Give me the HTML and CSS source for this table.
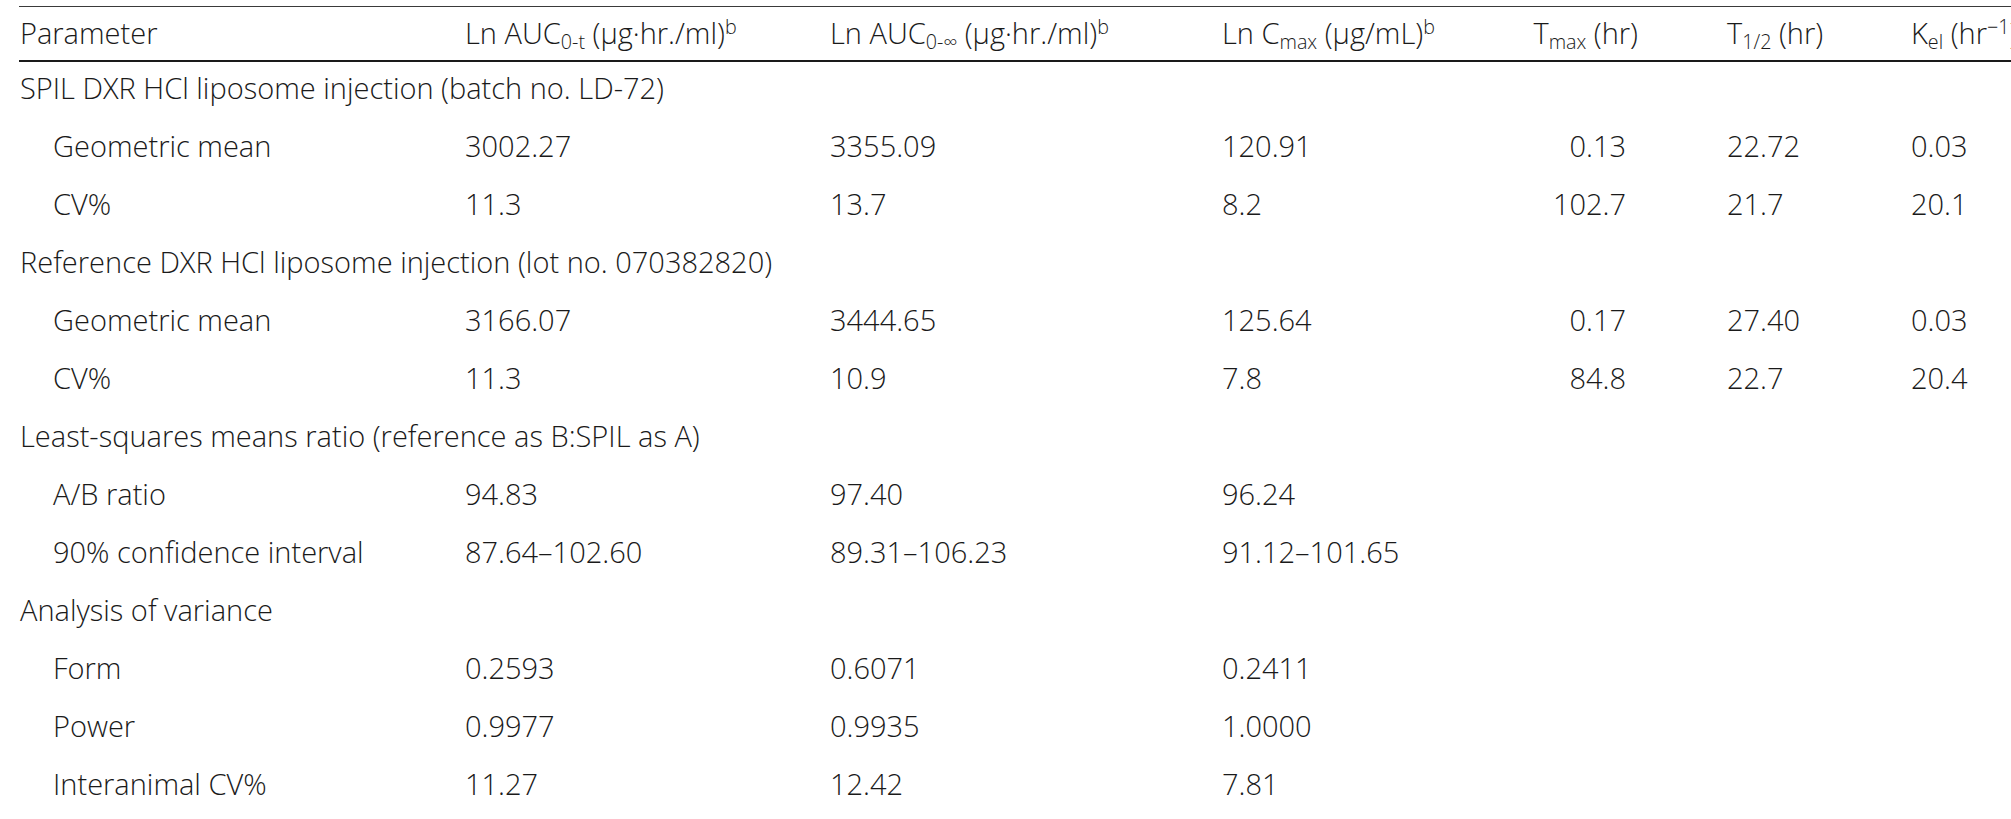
FILE: index.html
```html
<!DOCTYPE html>
<html lang="en">
<head>
<meta charset="utf-8">
<title>Pharmacokinetic parameters</title>
<link rel="stylesheet" href="styles.css">
</head>
<body>
<div class="frame">
<table class="pk">
  <colgroup>
    <col class="c1"><col class="c2"><col class="c3"><col class="c4"><col class="c5"><col class="c6"><col class="c7">
  </colgroup>
  <thead>
    <tr>
      <th class="first">Parameter</th>
      <th>Ln AUC<sub>0-t</sub> (μg·hr./ml)<sup>b</sup></th>
      <th>Ln AUC<sub>0-∞</sub> (μg·hr./ml)<sup>b</sup></th>
      <th>Ln C<sub>max</sub> (μg/mL)<sup>b</sup></th>
      <th class="num">T<sub>max</sub> (hr)</th>
      <th class="pad">T<sub>1/2</sub> (hr)</th>
      <th>K<sub>el</sub> (hr<sup>−1</sup>)</th>
    </tr>
  </thead>
  <tbody>
    <tr class="group"><td colspan="7" class="first">SPIL DXR HCl liposome injection (batch no. LD-72)</td></tr>
    <tr><td class="sub">Geometric mean</td><td>3002.27</td><td>3355.09</td><td>120.91</td><td class="num">0.13</td><td class="pad">22.72</td><td>0.03</td></tr>
    <tr><td class="sub">CV%</td><td>11.3</td><td>13.7</td><td>8.2</td><td class="num">102.7</td><td class="pad">21.7</td><td>20.1</td></tr>
    <tr class="group"><td colspan="7" class="first">Reference DXR HCl liposome injection (lot no. 070382820)</td></tr>
    <tr><td class="sub">Geometric mean</td><td>3166.07</td><td>3444.65</td><td>125.64</td><td class="num">0.17</td><td class="pad">27.40</td><td>0.03</td></tr>
    <tr><td class="sub">CV%</td><td>11.3</td><td>10.9</td><td>7.8</td><td class="num">84.8</td><td class="pad">22.7</td><td>20.4</td></tr>
    <tr class="group"><td colspan="7" class="first">Least-squares means ratio (reference as B:SPIL as A)</td></tr>
    <tr><td class="sub">A/B ratio</td><td>94.83</td><td>97.40</td><td>96.24</td><td class="num"></td><td class="pad"></td><td></td></tr>
    <tr><td class="sub">90% confidence interval</td><td>87.64–102.60</td><td>89.31–106.23</td><td>91.12–101.65</td><td class="num"></td><td class="pad"></td><td></td></tr>
    <tr class="group"><td colspan="7" class="first">Analysis of variance</td></tr>
    <tr><td class="sub">Form</td><td>0.2593</td><td>0.6071</td><td>0.2411</td><td class="num"></td><td class="pad"></td><td></td></tr>
    <tr><td class="sub">Power</td><td>0.9977</td><td>0.9935</td><td>1.0000</td><td class="num"></td><td class="pad"></td><td></td></tr>
    <tr><td class="sub">Interanimal CV%</td><td>11.27</td><td>12.42</td><td>7.81</td><td class="num"></td><td class="pad"></td><td></td></tr>
  </tbody>
</table>
</div>
</body>
</html>
```
FILE: styles.css
```css
html, body {
  margin: 0;
  padding: 0;
  background: #ffffff;
}
.frame {
  width: 2011px;
  height: 819px;
  overflow: hidden;
  padding-top: 6px;
  padding-left: 19px;
  box-sizing: border-box;
}
.pk {
  border-collapse: collapse;
  table-layout: fixed;
  width: 2100px;
  font-family: "Open Sans", "Noto Sans", sans-serif;
  font-size: 29px;
  font-weight: 350;
  color: #1a1a1a;
}
.c1 { width: 446px; }
.c2 { width: 365px; }
.c3 { width: 392px; }
.c4 { width: 266px; }
.c5 { width: 150px; }
.c6 { width: 273px; }
.c7 { width: 208px; }
.pk th, .pk td {
  padding: 0;
  text-align: left;
  font-weight: 350;
  white-space: nowrap;
  vertical-align: baseline;
}
.pk thead tr {
  border-top: 1px solid #3a3a3a;
  border-bottom: 2px solid #1a1a1a;
}
.pk thead th {
  height: 53px;
  line-height: 52px;
}
.pk tbody td {
  height: 52px;
  line-height: 52px;
  padding-bottom: 6px;
}
.pk .first { padding-left: 1px; overflow: visible; }
.pk .sub { padding-left: 34px; }
.pk .num { text-align: right; }
.pk td.num { padding-right: 12px; }
.pk .pad { padding-left: 89px; }
.pk sub, .pk sup {
  font-size: 68%;
  line-height: 0;
}
.pk sub { vertical-align: -0.25em; }
.pk sup { vertical-align: 0.5em; }
```
